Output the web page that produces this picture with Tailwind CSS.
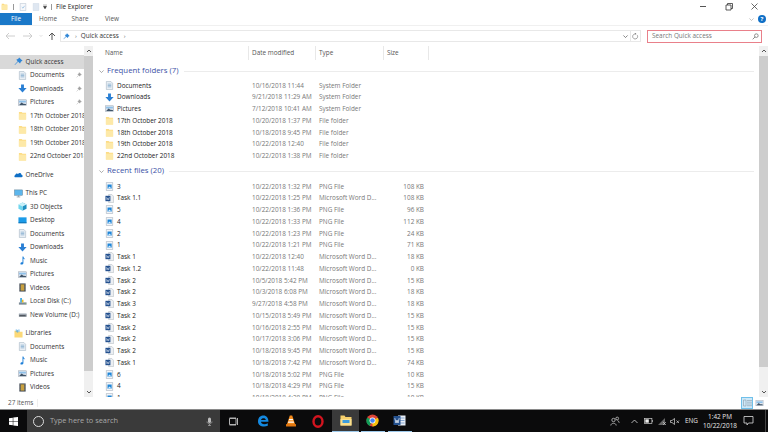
<!DOCTYPE html>
<html lang="en">

<head>
    <meta charset="UTF-8">
    <title>File Explorer</title>
    <script src="https://cdn.jsdelivr.net/npm/@tailwindcss/browser@4"></script>
</head>

<body class="w-[768px] h-[432px] overflow-hidden bg-white font-['Open_Sans','Noto_Sans',sans-serif] text-[6.4px] text-[#333] flex flex-col">
    <!-- shared icons -->
    <svg class="hidden">
        <symbol id="folder" viewBox="0 0 10 10"><path d="M1 1h3l1 1h4v7.5H1z" fill="#fcdc85" /><path d="M1 3h8v6.5H1z" fill="#fde9a8" /></symbol>
        <symbol id="docs" viewBox="0 0 10 10"><path d="M1.5.5h5l2 2v7h-7z" fill="#e8eef4" stroke="#9fb0c0" stroke-width=".6" /><path d="M3 3.5h4M3 5h4M3 6.5h4" stroke="#6f9fc8" stroke-width=".7" /></symbol>
        <symbol id="down" viewBox="0 0 10 10"><path d="M3.4.5h3.2v4h3L5 9.5.4 4.5h3z" fill="#2a7fd4" /></symbol>
        <symbol id="pics" viewBox="0 0 10 10"><rect x=".5" y="2" width="9" height="6.5" fill="#dfe6ee" stroke="#8e9aa8" stroke-width=".5" /><path d="M1.2 3h7.6v2H1.2z" fill="#8fc1ea" /><path d="M1.2 7.8 4 5l2 1.5 2.8.2v1.1z" fill="#3f5468" /></symbol>
        <symbol id="png" viewBox="0 0 10 10"><path d="M1.5.5h7v9h-7z" fill="#f2f5f8" stroke="#9aa8b6" stroke-width=".6" /><rect x="2.8" y="2.8" width="4.6" height="4.6" fill="#1f86d8" /><path d="M3 7.2 5 5l2.2 2.2z" fill="#d7ecfb" /></symbol>
        <symbol id="word" viewBox="0 0 10 10"><path d="M4 .5h3.5l2 2v7H4z" fill="#eceff2" stroke="#a4acb4" stroke-width=".5" /><rect x=".5" y="2" width="5.5" height="6" fill="#24518f" /><path d="M1.5 3.5 2.3 6.5 3.2 4.3 4.1 6.5 5 3.5" fill="none" stroke="#fff" stroke-width=".5" /></symbol>
        <symbol id="pin" viewBox="0 0 10 10"><path d="M5.5 1 9 4.5 7.5 5 6 7 3 4 5 2.500zM3.800 6.200 1 9" fill="#a0a0a0" stroke="#a0a0a0" stroke-width=".7" /></symbol>
        <symbol id="star" viewBox="0 0 10 10"><path d="M5.700.5 9.500 4.300 7.800 4.900 6.700 7.300 4.600 5.300 1 9 .6 8.600 4.100 4.800 2.500 3 4.800 2z" fill="#2f86d6" /></symbol>
        <symbol id="cloud" viewBox="0 0 10 10"><path d="M1.500 8C.2 8 0 6 1.400 5.600 1.600 3.800 3.600 3.300 4.500 4.400 5.500 2.600 8.200 3 8.300 5.200 10 5.400 10.100 8 8.400 8z" fill="#0f6fc6" /></symbol>
        <symbol id="pc" viewBox="0 0 10 10"><rect x=".5" y="1" width="9" height="6" fill="#5cb6ec" stroke="#5b7a90" stroke-width=".5" /><path d="M3 8.800h4M5 7v1.800" stroke="#8b9aa6" stroke-width=".9" /></symbol>
        <symbol id="cube" viewBox="0 0 10 10"><path d="M5 .5 9.500 2.800v4.700L5 9.800z" fill="#1f8fc0" /><path d="M5 .5.500 2.800v4.700L5 9.800z" fill="#6fd6ee" /><path d="M5 5 .5 2.800 5 .5l4.500 2.300z" fill="#c9f0f8" /></symbol>
        <symbol id="desk" viewBox="0 0 10 10"><rect x=".5" y="1.500" width="9" height="6.500" fill="#1b9be8" /><rect x=".5" y="7.200" width="9" height=".8" fill="#0d5f9c" /></symbol>
        <symbol id="music" viewBox="0 0 10 10"><path d="M5 .5h1c.2 1.600 1.800 2 2 3.800C7.400 3.300 6.600 3 6 3v5c0 1.600-3.300 2-3.300.5C2.700 7.300 4 6.800 5 7z" fill="#1d7fd8" /></symbol>
        <symbol id="vid" viewBox="0 0 10 10"><rect x="1.500" y=".5" width="7" height="9" fill="#3c4650" /><rect x="3" y="1.500" width="4" height="7" fill="#c8a040" /><path d="M2 1.500h.5M2 3.500h.5M2 5.500h.5M2 7.500h.5M7.500 1.500H8M7.500 3.500H8M7.500 5.500H8M7.500 7.500H8" stroke="#fff" stroke-width=".6" /></symbol>
        <symbol id="disk" viewBox="0 0 10 10"><path d="M1 6h8.500v2.500H1z" fill="#7c8a96" /><path d="M2.500 1h1.800v5H2.500z" fill="#30a0e0" /><path d="M4.300 3h1.800v3H4.300z" fill="#f0c020" /><path d="M7.500 7.200h1.200" stroke="#7ed957" stroke-width=".6" /></symbol>
        <symbol id="vol" viewBox="0 0 10 10"><path d="M1 4.500h8.500v3H1z" fill="#6e7882" /><path d="M1 3.500h8.500v1.500H1z" fill="#c4cbd2" /><path d="M2 6.300h6" stroke="#2e3338" stroke-width=".6" /></symbol>
        <symbol id="lib" viewBox="0 0 10 10"><path d="M.5 2h3l1 1h5v6.500h-9z" fill="#fcd978" /><path d="M2.500.5v3M4 1v3M5.500.5v3" stroke="#4aa3e0" stroke-width=".9" /></symbol>
        <symbol id="chev" viewBox="0 0 10 10"><path d="M2 3.500 5 6.500 8 3.500" fill="none" stroke="currentColor" stroke-width="1" /></symbol>
    </svg>

    <!-- title bar -->
    <div class="h-[13px] flex items-center shrink-0 relative">
        <svg class="w-[7px] h-[7px] ml-[1px]"><use href="#folder" /></svg>
        <div class="w-px h-[6px] bg-[#999] ml-[5px]"></div>
        <svg class="w-[8px] h-[8px] ml-[5px]" viewBox="0 0 10 10"><path d="M1.500.5h7v9h-7z" fill="#f6f8fb" stroke="#b5c2d0" stroke-width=".7" /><path d="m3.500 5 1.500 1.500 2-3" fill="none" stroke="#6fa8d8" stroke-width=".7" /></svg>
        <svg class="w-[8px] h-[8px] ml-[5px]" viewBox="0 0 10 10"><path d="M1.500.5h7v9h-7z" fill="#dfe7f1" stroke="#c5d2e0" stroke-width=".5" /></svg>
        <svg class="w-[4px] h-[6px] ml-[3px]" viewBox="0 0 6 8"><path d="M0 1h6M.5 3h5L3 7z" stroke="#333" stroke-width=".5" fill="#333" /></svg>
        <div class="w-px h-[6px] bg-[#999] ml-[4px]"></div>
        <span class="ml-[4px] text-[#222]">File Explorer</span>
        <div class="ml-auto flex items-center">
            <svg class="w-[25px] h-[11px]" viewBox="0 0 25 11"><path d="M9 5.500h6" stroke="#555" stroke-width="1" /></svg>
            <svg class="w-[25px] h-[11px]" viewBox="0 0 25 11"><path d="M10 4h5v5h-5zM11.500 4V2.500h5v5H15" fill="none" stroke="#333" stroke-width=".8" /></svg>
            <svg class="w-[27px] h-[11px]" viewBox="0 0 27 11"><path d="m10.500 2.500 6 6M16.500 2.500l-6 6" stroke="#444" stroke-width=".8" /></svg>
        </div>
    </div>

    <!-- ribbon tabs -->
    <div class="h-[13px] flex items-center shrink-0 border-b border-[#f0f0f0] text-[#555]">
        <div class="w-[32px] h-full bg-[#1a78c8] text-white flex items-center justify-center">File</div>
        <span class="w-[32px] text-center">Home</span>
        <span class="w-[32px] text-center">Share</span>
        <span class="w-[32px] text-center">View</span>
        <svg class="ml-auto w-[7px] h-[7px] text-[#aaa]"><use href="#chev" /></svg>
        <div class="ml-[3px] mr-[2px] w-[8px] h-[8px] rounded-full bg-[#0f6fc6] text-white text-[6px] font-bold flex items-center justify-center">?</div>
    </div>

    <!-- address row -->
    <div class="h-[20px] flex items-center shrink-0">
        <svg class="w-[60px] h-[12px]" viewBox="0 0 60 12"><path d="M6 6h9M9 3 6 6l3 3M23 6h9M29 3l3 3-3 3" fill="none" stroke="#c8c8c8" stroke-width=".9" /><path d="m39.500 5 1.500 1.500L42.500 5" fill="none" stroke="#ccc" stroke-width=".6" /><path d="M52 10V3M49 6l3-3 3 3" fill="none" stroke="#555" stroke-width="1" /></svg>
        <div class="w-[581px] h-[12px] border border-[#e8e8e8] flex items-center text-[#333]">
            <svg class="w-[7px] h-[7px] ml-[2px]"><use href="#star" /></svg>
            <span class="ml-[5px] text-[#666] text-[6px]">&rsaquo;</span>
            <span class="ml-[4px]">Quick access</span>
            <span class="ml-[5px] text-[#666] text-[6px]">&rsaquo;</span>
            <svg class="ml-auto w-[7px] h-[7px] text-[#555]"><use href="#chev" /></svg>
            <div class="w-px h-full bg-[#e8e8e8] ml-[1px]"></div>
            <svg class="w-[9px] h-[7px]" viewBox="0 0 9 7"><path d="M6.300 2.200A2.500 2.500 0 1 1 4.500 1V0M3.800 1h1.500" fill="none" stroke="#666" stroke-width=".6" /></svg>
        </div>
        <div class="ml-[6px] w-[115px] h-[13px] border border-[#e9808a] flex items-center pl-[4px] pr-[2px] text-[#777]">
            <span>Search Quick access</span>
            <svg class="ml-auto w-[7px] h-[7px]" viewBox="0 0 10 10"><circle cx="6.200" cy="3.800" r="2.600" fill="none" stroke="#666" stroke-width="1" /><path d="m4.300 5.700-3.300 3.300" stroke="#666" stroke-width="1.100" /></svg>
        </div>
    </div>

    <!-- panes -->
    <div class="h-[351px] flex shrink-0">
        <div id="nav" class="w-[84px] overflow-hidden pt-[9px] shrink-0"></div>
        <!-- nav scrollbar -->
        <div class="w-[9px] bg-[#f0f0f0] flex flex-col items-center shrink-0">
            <svg class="w-[6px] h-[10px] shrink-0 text-[#555]" viewBox="0 0 6 10"><path d="m1 6 2-2 2 2" fill="none" stroke="currentColor" stroke-width="1" /></svg>
            <div class="w-full h-[315px] bg-[#cdcdcd] shrink-0"></div>
            <svg class="w-[6px] h-[10px] mt-auto shrink-0 text-[#555]" viewBox="0 0 6 10"><path d="m1 4 2 2 2-2" fill="none" stroke="currentColor" stroke-width="1" /></svg>
        </div>

        <div class="flex-1 min-w-0 overflow-hidden">
            <!-- column headers -->
            <div class="h-[14px] flex items-center text-[#555] ml-[12px]">
                <span class="w-[143px]">Name</span><div class="w-px h-full bg-[#e8e8e8] mr-[3px]"></div>
                <span class="w-[63px]">Date modified</span><div class="w-px h-full bg-[#e8e8e8] mr-[3px]"></div>
                <span class="w-[64px]">Type</span><div class="w-px h-full bg-[#e8e8e8] mr-[3px]"></div>
                <span class="w-[41px]">Size</span><div class="w-px h-full bg-[#e8e8e8]"></div>
            </div>
            <div id="files"></div>
        </div>

        <!-- file scrollbar -->
        <div class="w-[9px] bg-[#f0f0f0] flex flex-col items-center shrink-0">
            <svg class="w-[6px] h-[10px] shrink-0 text-[#555]" viewBox="0 0 6 10"><path d="m1 6 2-2 2 2" fill="none" stroke="currentColor" stroke-width="1" /></svg>
            <div class="w-full h-[311px] bg-[#cdcdcd] shrink-0"></div>
            <svg class="w-[6px] h-[10px] mt-auto shrink-0 text-[#555]" viewBox="0 0 6 10"><path d="m1 4 2 2 2-2" fill="none" stroke="currentColor" stroke-width="1" /></svg>
        </div>
    </div>

    <!-- status bar -->
    <div class="h-[12px] flex items-center shrink-0 text-[#555] pl-[8px] pr-[4px]">
        <span>27 items</span>
        <div class="w-px h-[8px] bg-[#eee] ml-[4px]"></div>
        <div class="ml-auto w-[12px] h-[12px] bg-[#cde8f8] border border-[#6fc0ea] flex items-center justify-center">
            <svg class="w-[9px] h-[8px]" viewBox="0 0 9 8"><path d="M.5 1h2.500v6H.5zM4 1.500h5M4 3.200h5M4 5h5M4 6.700h5" fill="none" stroke="#8a9aa8" stroke-width=".6" /></svg>
        </div>
        <svg class="w-[9px] h-[8px] ml-[2px]"><use href="#pics" /></svg>
    </div>

    <!-- taskbar -->
    <div class="h-[23px] bg-[#0b0b0c] border-t border-[#8a8a8a] flex items-center shrink-0 text-[#e8e8e8] relative">
        <div class="w-[27px] h-full flex items-center justify-center">
            <svg class="w-[9px] h-[9px]" viewBox="0 0 9 9"><path d="M0 1.200 3.800.7v3.500H0zM4.300.6 9 0v4.200H4.300zM0 4.800h3.800v3.500L0 7.800zM4.300 4.800H9V9l-4.700-.6z" fill="#fff" /></svg>
        </div>
        <div class="w-[193px] h-full bg-[#3a3a3a] flex items-center text-[#a8a8a8] text-[7.400px]">
            <div class="ml-[6px] w-[11px] h-[11px] rounded-full border-[1.500px] border-[#ddd]"></div>
            <span class="ml-[6px]">Type here to search</span>
            <svg class="ml-auto mr-[7px] w-[7px] h-[9px]" viewBox="0 0 7 9"><rect x="2" y=".5" width="3" height="5.500" rx="1.500" fill="#bbb" /><path d="M1 4.500c0 3 5 3 5 0M3.500 7v1.500M2 8.500h3" fill="none" stroke="#bbb" stroke-width=".6" /></svg>
        </div>
        <svg class="ml-[9px] w-[10px] h-[9px]" viewBox="0 0 10 9"><path d="M.5 1.500h6.500v6H.5zM8.500 1v7M.5 0h6.500M.5 9h6.500" fill="none" stroke="#ddd" stroke-width=".8" /></svg>

        <!-- pinned apps -->
        <div class="ml-[10px] flex items-center h-full">
            <div class="w-[28px] h-full flex items-center justify-center">
                <svg class="w-[12px] h-[12px]" viewBox="0 0 12 12"><path d="M1 6.500C1 2 4 .5 6.500.5 9.500.5 11.500 3 11.500 6.800H4C4 9.500 8 10 10.800 8.300v2.500C7 12.500 1 11.500 1 6.500zM4 5h4.800C8.700 2.700 4.600 2.500 4 5z" fill="#1489e0" /></svg>
            </div>
            <div class="w-[27px] h-full flex items-center justify-center">
                <svg class="w-[12px] h-[12px]" viewBox="0 0 12 12"><path d="M4.800.5h2.400L10 9H2z" fill="#f28a1c" /><path d="M4.200 4h3.600l.4 1.300H3.800zM3.300 6.500h5.400l.4 1.300H2.900z" fill="#fff" /><rect x="1" y="9" width="10" height="2.500" rx=".5" fill="#e2770f" /></svg>
            </div>
            <div class="w-[28px] h-full flex items-center justify-center">
                <svg class="w-[12px] h-[13px]" viewBox="0 0 12 13"><ellipse cx="6" cy="6.500" rx="4.500" ry="5.300" fill="none" stroke="#d3141f" stroke-width="2.400" /></svg>
            </div>
            <div class="w-[27px] h-full bg-[#3a3a3a] border-b border-[#9cc8ea] flex items-center justify-center">
                <svg class="w-[12px] h-[11px]" viewBox="0 0 12 11"><path d="M.5.500h4l1 1.500h6v8.500H.5z" fill="#f6cf6b" /><path d="M.5 4h11v6.500H.5z" fill="#fbe08f" /><rect x="2.500" y="5" width="7" height="3" fill="#3d9ddd" /></svg>
            </div>
            <div class="w-[24px] h-full border-b border-[#9cc8ea] flex items-center justify-center mx-[1.500px]">
                <svg class="w-[13px] h-[13px]" viewBox="0 0 12 12"><circle cx="6" cy="6" r="5.500" fill="#db4437" /><path d="M6 6 11 3.500A5.500 5.500 0 0 1 6 11.500z" fill="#f4c20d" /><path d="M6 6 3.200 11A5.500 5.500 0 0 1 1.200 3.200z" fill="#0f9d58" /><circle cx="6" cy="6" r="2.700" fill="#fff" /><circle cx="6" cy="6" r="2.100" fill="#4285f4" /></svg>
            </div>
            <div class="w-[24px] h-full border-b border-[#9cc8ea] flex items-center justify-center mx-[1.500px]">
                <svg class="w-[13px] h-[11px]" viewBox="0 0 13 11"><rect x="5" y=".5" width="7.500" height="10" fill="#e8eef6" /><path d="M6.500 3h5M6.500 5.500h5M6.500 8h5" stroke="#5b86c0" stroke-width=".7" /><rect x=".5" y="1" width="7" height="9" fill="#24518f" /><path d="M1.800 3.200 3 8l1-3 1 3 1.200-4.800" fill="none" stroke="#fff" stroke-width=".7" /></svg>
            </div>
        </div>

        <!-- tray -->
        <div class="ml-auto flex items-center h-full">
            <svg class="w-[10px] h-[10px]" viewBox="0 0 10 10"><circle cx="3.500" cy="4" r="1.700" fill="none" stroke="#ddd" stroke-width=".7" /><circle cx="7.200" cy="2.500" r="1.400" fill="none" stroke="#ddd" stroke-width=".7" /><path d="M.8 9.500C1 6.500 6 6.500 6.200 9.500M7.500 4.600c1 .3 1.600 1 1.700 2.200" fill="none" stroke="#ddd" stroke-width=".7" /></svg>
            <svg class="ml-[11px] w-[7px] h-[5px]" viewBox="0 0 7 5"><path d="m.5 4 3-3 3 3" fill="none" stroke="#ddd" stroke-width=".8" /></svg>
            <svg class="ml-[6px] w-[9px] h-[6px]" viewBox="0 0 9 6"><rect x=".4" y=".4" width="7.500" height="5.200" fill="none" stroke="#ccc" stroke-width=".7" /><rect x="1.300" y="1.300" width="3.500" height="3.400" fill="#eee" /><path d="M8.500 2v2" stroke="#ccc" stroke-width=".7" /></svg>
            <svg class="ml-[5px] w-[8px] h-[7px]" viewBox="0 0 8 7"><path d="M0 7 7 0v7z" fill="#666" /><path d="m5 4 3 3M8 4 5 7" stroke="#ddd" stroke-width=".6" /></svg>
            <svg class="ml-[4px] w-[10px] h-[7px]" viewBox="0 0 10 7"><path d="M.5 2.500h1.500L4.500.5v6L2 4.500H.5zM6.500 2.500l2.500 2.500M9 2.500 6.500 5" fill="none" stroke="#ddd" stroke-width=".7" /></svg>
            <span class="ml-[5px] text-[6.400px] w-[14px]">ENG</span>
            <div class="ml-[3px] w-[36px] flex flex-col items-center leading-[9px] text-[6.400px]"><span>1:42 PM</span><span>10/22/2018</span></div>
            <svg class="ml-[5px] w-[11px] h-[10px]" viewBox="0 0 11 10"><path d="M1 .5h9v6.500H5.500L4 9V7H1z" fill="none" stroke="#ddd" stroke-width=".8" /></svg>
            <div class="w-px h-full bg-[#444] ml-[11px] mr-[2px]"></div>
        </div>
    </div>

    <script>
        const navItems = [
            ['star', 'Quick access', 0, 0, 1], ['docs', 'Documents', 1, 1], ['down', 'Downloads', 1, 1], ['pics', 'Pictures', 1, 1],
            ['folder', '17th October 2018', 1], ['folder', '18th October 2018', 1], ['folder', '19th October 2018', 1], ['folder', '22nd October 2018', 1],
            ['gap'], ['cloud', 'OneDrive', 0], ['gap'], ['pc', 'This PC', 0],
            ['cube', '3D Objects', 1], ['desk', 'Desktop', 1], ['docs', 'Documents', 1], ['down', 'Downloads', 1], ['music', 'Music', 1], ['pics', 'Pictures', 1],
            ['vid', 'Videos', 1], ['disk', 'Local Disk (C:)', 1], ['vol', 'New Volume (D:)', 1],
            ['gap'], ['lib', 'Libraries', 0], ['docs', 'Documents', 1], ['music', 'Music', 1], ['pics', 'Pictures', 1], ['vid', 'Videos', 1],
        ];

        document.getElementById('nav').innerHTML = navItems.map(([icon, label, sub, pinned, active]) => {
            if (icon === 'gap') return '<div class="h-[5px]"></div>';
            return `<div class="h-[13.5px] flex items-center whitespace-nowrap text-[#333] ${active ? 'bg-[#d9d9d9]' : ''}">
                <svg class="w-[9px] h-[9px] shrink-0 ${sub ? 'ml-[18px]' : 'ml-[13.500px]'}"><use href="#${icon}" /></svg>
                <span class="ml-[3px]">${label}</span>
                ${pinned ? '<svg class="w-[6px] h-[6px] ml-auto mr-[2px] shrink-0"><use href="#pin" /></svg>' : ''}
            </div>`;
        }).join('');

        const folders = [
            ['docs', 'Documents', '10/16/2018 11:44', 'System Folder', ''],
            ['down', 'Downloads', '9/21/2018 11:29 AM', 'System Folder', ''],
            ['pics', 'Pictures', '7/12/2018 10:41 AM', 'System Folder', ''],
            ['folder', '17th October 2018', '10/20/2018 1:37 PM', 'File folder', ''],
            ['folder', '18th October 2018', '10/18/2018 9:45 PM', 'File folder', ''],
            ['folder', '19th October 2018', '10/22/2018 12:40', 'File folder', ''],
            ['folder', '22nd October 2018', '10/22/2018 1:38 PM', 'File folder', ''],
        ];
        const WORD = 'Microsoft Word D...';
        const recent = [
            ['png', '3', '10/22/2018 1:32 PM', 'PNG File', '108 KB'],
            ['word', 'Task 1.1', '10/22/2018 1:25 PM', WORD, '108 KB'],
            ['png', '5', '10/22/2018 1:36 PM', 'PNG File', '96 KB'],
            ['png', '4', '10/22/2018 1:33 PM', 'PNG File', '112 KB'],
            ['png', '2', '10/22/2018 1:23 PM', 'PNG File', '24 KB'],
            ['png', '1', '10/22/2018 1:21 PM', 'PNG File', '71 KB'],
            ['word', 'Task 1', '10/22/2018 12:40', WORD, '18 KB'],
            ['word', 'Task 1.2', '10/22/2018 11:48', WORD, '0 KB'],
            ['word', 'Task 2', '10/5/2018 5:42 PM', WORD, '15 KB'],
            ['word', 'Task 2', '10/3/2018 6:08 PM', WORD, '18 KB'],
            ['word', 'Task 3', '9/27/2018 4:58 PM', WORD, '18 KB'],
            ['word', 'Task 2', '10/15/2018 5:49 PM', WORD, '15 KB'],
            ['word', 'Task 2', '10/16/2018 2:55 PM', WORD, '15 KB'],
            ['word', 'Task 2', '10/17/2018 3:06 PM', WORD, '15 KB'],
            ['word', 'Task 2', '10/18/2018 9:45 PM', WORD, '15 KB'],
            ['word', 'Task 1', '10/18/2018 7:42 PM', WORD, '74 KB'],
            ['png', '6', '10/18/2018 5:02 PM', 'PNG File', '10 KB'],
            ['png', '4', '10/18/2018 4:29 PM', 'PNG File', '15 KB'],
            ['png', '1', '10/18/2018 4:28 PM', 'PNG File', '10 KB'],
        ];

        const fileRow = ([icon, name, date, type, size]) => `<div class="h-[11.750px] flex items-center whitespace-nowrap">
            <svg class="w-[9px] h-[9px] ml-[12px] shrink-0"><use href="#${icon}" /></svg>
            <span class="w-[135px] ml-[3px] text-[#222]">${name}</span>
            <span class="w-[67px] text-[#777]">${date}</span>
            <span class="w-[62px] text-[#777]">${type}</span>
            <span class="w-[43px] text-right text-[#777]">${size}</span>
        </div>`;
        const groupHead = (title, spacing) => `<div class="h-[12px] flex items-center ${spacing} mr-[5px]">
            <svg class="w-[7px] h-[7px] ml-[5px] shrink-0 text-[#888]"><use href="#chev" /></svg>
            <span class="ml-[2px] text-[7.800px] text-[#3a50a5] whitespace-nowrap">${title}</span>
            <div class="flex-1 h-px bg-[#ececec] ml-[5px]"></div>
        </div>`;

        document.getElementById('files').innerHTML =
            groupHead('Frequent folders (7)', 'mt-[5px] mb-[2.500px]') + folders.map(fileRow).join('') +
            groupHead('Recent files (20)', 'mt-[3.250px] mb-[3.500px]') + recent.map(fileRow).join('');
    </script>
</body>

</html>
